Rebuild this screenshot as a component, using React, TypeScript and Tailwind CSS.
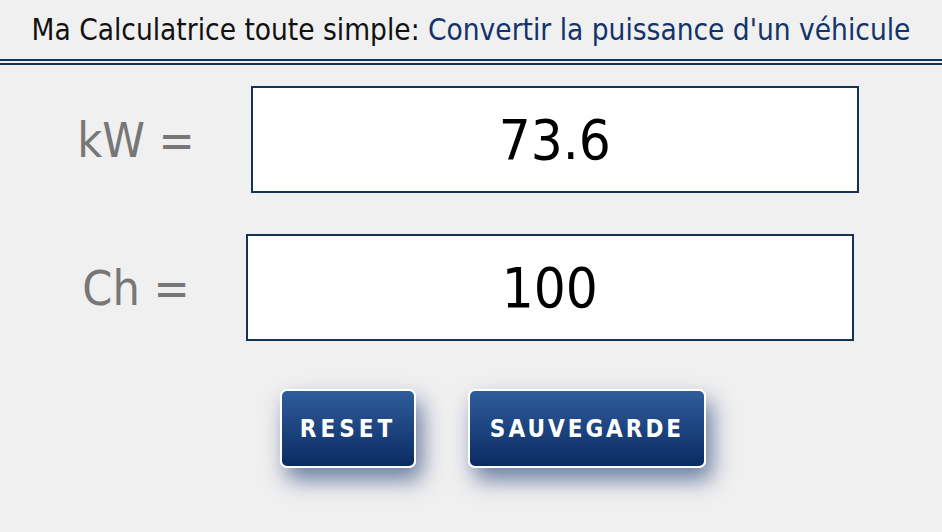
import React from "react";

const font = { fontFamily: '"DejaVu Sans Condensed", "Liberation Sans", sans-serif' };

function Row({ label, value }: { label: string; value: string }) {
  return (
    <div className="flex items-center justify-center gap-[56px] pr-[6px]">
      <span className="text-[48px] leading-none text-[#777777]">{label}</span>
      <div className="flex h-[107px] w-[608px] items-center justify-center border-2 border-[#13335a] bg-white">
        <span className="text-[56px] leading-none text-black">{value}</span>
      </div>
    </div>
  );
}

export default function App() {
  return (
    <div className="min-h-screen w-full bg-[#f0f0f0]" style={font}>
      {/* header */}
      <div className="flex h-[59px] items-center justify-center pt-[2px]">
        <h1 className="text-[29.5px] leading-none text-[#111111]">
          Ma Calculatrice toute simple: <span className="text-[#12336b]">Convertir la puissance d'un véhicule</span>
        </h1>
      </div>
      <div className="h-[2px] bg-[#12335a]" />
      <div className="h-[2px]" />
      <div className="h-[2px] bg-[#12335a]" />

      <div className="flex flex-col gap-[41px] pt-[21px]">
        <Row label="kW =" value="73.6" />
        <Row label="Ch =" value="100" />
      </div>

      <div className="flex justify-center gap-[52px] pt-[48px] pl-[44px]">
        <button className="h-[79px] w-[136px] rounded-[7px] border-2 border-white bg-gradient-to-b from-[#2f5d9c] to-[#0b2c63] text-[24px] font-bold tracking-[4px] text-white shadow-[6px_12px_22px_rgba(20,50,110,0.6)]">
          RESET
        </button>
        <button className="h-[79px] w-[238px] rounded-[7px] border-2 border-white bg-gradient-to-b from-[#2f5d9c] to-[#0b2c63] text-[24px] font-bold tracking-[3px] text-white shadow-[6px_12px_22px_rgba(20,50,110,0.6)]">
          SAUVEGARDE
        </button>
      </div>
    </div>
  );
}
